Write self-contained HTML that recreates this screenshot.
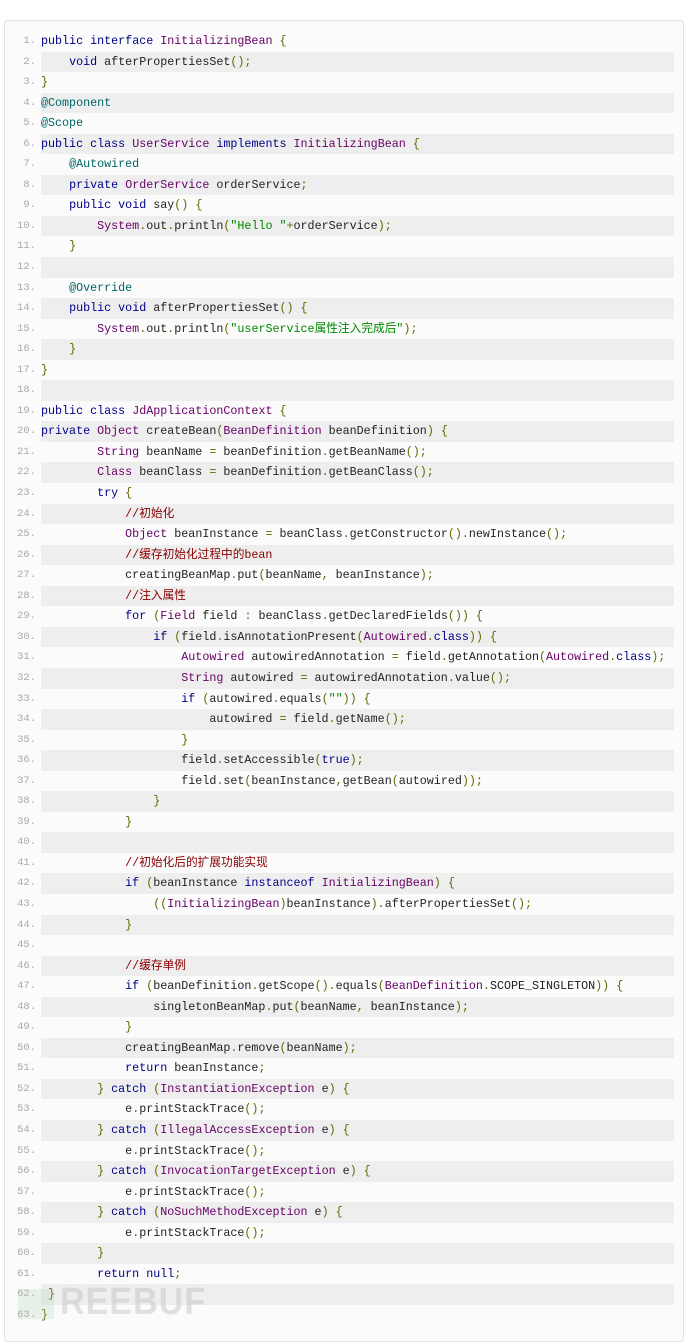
<!DOCTYPE html>
<html><head><meta charset="utf-8"><style>
html,body{margin:0;padding:0;background:#fff;width:690px;height:1326px;overflow:hidden}
.box{position:absolute;left:4px;top:20px;width:678px;height:1320px;border:1px solid #e3e3e3;border-radius:3px;background:#fbfbfb}
.code{position:absolute;left:0;top:31px;width:690px;font-family:"Liberation Mono","Noto Sans CJK SC",monospace;font-size:11.7px;color:#222}
.l{position:relative;height:20.55px;line-height:20.55px;white-space:pre}
.l .n{position:absolute;left:0;width:36px;text-align:right;color:#aaa;font-size:10.5px}
.l .c0{position:absolute;left:41px;right:16px;top:0;bottom:0;padding-left:0}
.l:nth-child(even) .c0{background:#eeeeee}
.k{color:#000088}.t{color:#660066}.a{color:#006666}.s{color:#008800}.c{color:#880000}.p{color:#666600}
.wm{position:absolute;left:60px;top:1281px;font-family:"Liberation Sans",sans-serif;font-weight:bold;font-size:38px;color:rgba(190,190,190,0.45);letter-spacing:1px;z-index:5;transform:scaleX(0.9);transform-origin:left}
.wmi{position:absolute;left:18px;top:1289px;width:36px;height:30px;z-index:5;background:rgba(170,210,180,0.25)}
</style></head><body>
<div class="box"></div>
<div class="code">
<div class="l"><span class="n">1.</span><span class="c0"><span class="k">public</span> <span class="k">interface</span> <span class="t">InitializingBean</span> <span class="p">{</span></span></div>
<div class="l"><span class="n">2.</span><span class="c0">    <span class="k">void</span> afterPropertiesSet<span class="p">();</span></span></div>
<div class="l"><span class="n">3.</span><span class="c0"><span class="p">}</span></span></div>
<div class="l"><span class="n">4.</span><span class="c0"><span class="a">@Component</span></span></div>
<div class="l"><span class="n">5.</span><span class="c0"><span class="a">@Scope</span></span></div>
<div class="l"><span class="n">6.</span><span class="c0"><span class="k">public</span> <span class="k">class</span> <span class="t">UserService</span> <span class="k">implements</span> <span class="t">InitializingBean</span> <span class="p">{</span></span></div>
<div class="l"><span class="n">7.</span><span class="c0">    <span class="a">@Autowired</span></span></div>
<div class="l"><span class="n">8.</span><span class="c0">    <span class="k">private</span> <span class="t">OrderService</span> orderService<span class="p">;</span></span></div>
<div class="l"><span class="n">9.</span><span class="c0">    <span class="k">public</span> <span class="k">void</span> say<span class="p">()</span> <span class="p">{</span></span></div>
<div class="l"><span class="n">10.</span><span class="c0">        <span class="t">System</span><span class="p">.</span>out<span class="p">.</span>println<span class="p">(</span><span class="s">"Hello "</span><span class="p">+</span>orderService<span class="p">);</span></span></div>
<div class="l"><span class="n">11.</span><span class="c0">    <span class="p">}</span></span></div>
<div class="l"><span class="n">12.</span><span class="c0"></span></div>
<div class="l"><span class="n">13.</span><span class="c0">    <span class="a">@Override</span></span></div>
<div class="l"><span class="n">14.</span><span class="c0">    <span class="k">public</span> <span class="k">void</span> afterPropertiesSet<span class="p">()</span> <span class="p">{</span></span></div>
<div class="l"><span class="n">15.</span><span class="c0">        <span class="t">System</span><span class="p">.</span>out<span class="p">.</span>println<span class="p">(</span><span class="s">"userService属性注入完成后"</span><span class="p">);</span></span></div>
<div class="l"><span class="n">16.</span><span class="c0">    <span class="p">}</span></span></div>
<div class="l"><span class="n">17.</span><span class="c0"><span class="p">}</span></span></div>
<div class="l"><span class="n">18.</span><span class="c0"></span></div>
<div class="l"><span class="n">19.</span><span class="c0"><span class="k">public</span> <span class="k">class</span> <span class="t">JdApplicationContext</span> <span class="p">{</span></span></div>
<div class="l"><span class="n">20.</span><span class="c0"><span class="k">private</span> <span class="t">Object</span> createBean<span class="p">(</span><span class="t">BeanDefinition</span> beanDefinition<span class="p">)</span> <span class="p">{</span></span></div>
<div class="l"><span class="n">21.</span><span class="c0">        <span class="t">String</span> beanName <span class="p">=</span> beanDefinition<span class="p">.</span>getBeanName<span class="p">();</span></span></div>
<div class="l"><span class="n">22.</span><span class="c0">        <span class="t">Class</span> beanClass <span class="p">=</span> beanDefinition<span class="p">.</span>getBeanClass<span class="p">();</span></span></div>
<div class="l"><span class="n">23.</span><span class="c0">        <span class="k">try</span> <span class="p">{</span></span></div>
<div class="l"><span class="n">24.</span><span class="c0">            <span class="c">//初始化</span></span></div>
<div class="l"><span class="n">25.</span><span class="c0">            <span class="t">Object</span> beanInstance <span class="p">=</span> beanClass<span class="p">.</span>getConstructor<span class="p">().</span>newInstance<span class="p">();</span></span></div>
<div class="l"><span class="n">26.</span><span class="c0">            <span class="c">//缓存初始化过程中的bean</span></span></div>
<div class="l"><span class="n">27.</span><span class="c0">            creatingBeanMap<span class="p">.</span>put<span class="p">(</span>beanName<span class="p">,</span> beanInstance<span class="p">);</span></span></div>
<div class="l"><span class="n">28.</span><span class="c0">            <span class="c">//注入属性</span></span></div>
<div class="l"><span class="n">29.</span><span class="c0">            <span class="k">for</span> <span class="p">(</span><span class="t">Field</span> field <span class="p">:</span> beanClass<span class="p">.</span>getDeclaredFields<span class="p">())</span> <span class="p">{</span></span></div>
<div class="l"><span class="n">30.</span><span class="c0">                <span class="k">if</span> <span class="p">(</span>field<span class="p">.</span>isAnnotationPresent<span class="p">(</span><span class="t">Autowired</span><span class="p">.</span><span class="k">class</span><span class="p">))</span> <span class="p">{</span></span></div>
<div class="l"><span class="n">31.</span><span class="c0">                    <span class="t">Autowired</span> autowiredAnnotation <span class="p">=</span> field<span class="p">.</span>getAnnotation<span class="p">(</span><span class="t">Autowired</span><span class="p">.</span><span class="k">class</span><span class="p">);</span></span></div>
<div class="l"><span class="n">32.</span><span class="c0">                    <span class="t">String</span> autowired <span class="p">=</span> autowiredAnnotation<span class="p">.</span>value<span class="p">();</span></span></div>
<div class="l"><span class="n">33.</span><span class="c0">                    <span class="k">if</span> <span class="p">(</span>autowired<span class="p">.</span>equals<span class="p">(</span><span class="s">""</span><span class="p">))</span> <span class="p">{</span></span></div>
<div class="l"><span class="n">34.</span><span class="c0">                        autowired <span class="p">=</span> field<span class="p">.</span>getName<span class="p">();</span></span></div>
<div class="l"><span class="n">35.</span><span class="c0">                    <span class="p">}</span></span></div>
<div class="l"><span class="n">36.</span><span class="c0">                    field<span class="p">.</span>setAccessible<span class="p">(</span><span class="k">true</span><span class="p">);</span></span></div>
<div class="l"><span class="n">37.</span><span class="c0">                    field<span class="p">.</span>set<span class="p">(</span>beanInstance<span class="p">,</span>getBean<span class="p">(</span>autowired<span class="p">));</span></span></div>
<div class="l"><span class="n">38.</span><span class="c0">                <span class="p">}</span></span></div>
<div class="l"><span class="n">39.</span><span class="c0">            <span class="p">}</span></span></div>
<div class="l"><span class="n">40.</span><span class="c0"></span></div>
<div class="l"><span class="n">41.</span><span class="c0">            <span class="c">//初始化后的扩展功能实现</span></span></div>
<div class="l"><span class="n">42.</span><span class="c0">            <span class="k">if</span> <span class="p">(</span>beanInstance <span class="k">instanceof</span> <span class="t">InitializingBean</span><span class="p">)</span> <span class="p">{</span></span></div>
<div class="l"><span class="n">43.</span><span class="c0">                <span class="p">((</span><span class="t">InitializingBean</span><span class="p">)</span>beanInstance<span class="p">).</span>afterPropertiesSet<span class="p">();</span></span></div>
<div class="l"><span class="n">44.</span><span class="c0">            <span class="p">}</span></span></div>
<div class="l"><span class="n">45.</span><span class="c0"></span></div>
<div class="l"><span class="n">46.</span><span class="c0">            <span class="c">//缓存单例</span></span></div>
<div class="l"><span class="n">47.</span><span class="c0">            <span class="k">if</span> <span class="p">(</span>beanDefinition<span class="p">.</span>getScope<span class="p">().</span>equals<span class="p">(</span><span class="t">BeanDefinition</span><span class="p">.</span>SCOPE_SINGLETON<span class="p">))</span> <span class="p">{</span></span></div>
<div class="l"><span class="n">48.</span><span class="c0">                singletonBeanMap<span class="p">.</span>put<span class="p">(</span>beanName<span class="p">,</span> beanInstance<span class="p">);</span></span></div>
<div class="l"><span class="n">49.</span><span class="c0">            <span class="p">}</span></span></div>
<div class="l"><span class="n">50.</span><span class="c0">            creatingBeanMap<span class="p">.</span>remove<span class="p">(</span>beanName<span class="p">);</span></span></div>
<div class="l"><span class="n">51.</span><span class="c0">            <span class="k">return</span> beanInstance<span class="p">;</span></span></div>
<div class="l"><span class="n">52.</span><span class="c0">        <span class="p">}</span> <span class="k">catch</span> <span class="p">(</span><span class="t">InstantiationException</span> e<span class="p">)</span> <span class="p">{</span></span></div>
<div class="l"><span class="n">53.</span><span class="c0">            e<span class="p">.</span>printStackTrace<span class="p">();</span></span></div>
<div class="l"><span class="n">54.</span><span class="c0">        <span class="p">}</span> <span class="k">catch</span> <span class="p">(</span><span class="t">IllegalAccessException</span> e<span class="p">)</span> <span class="p">{</span></span></div>
<div class="l"><span class="n">55.</span><span class="c0">            e<span class="p">.</span>printStackTrace<span class="p">();</span></span></div>
<div class="l"><span class="n">56.</span><span class="c0">        <span class="p">}</span> <span class="k">catch</span> <span class="p">(</span><span class="t">InvocationTargetException</span> e<span class="p">)</span> <span class="p">{</span></span></div>
<div class="l"><span class="n">57.</span><span class="c0">            e<span class="p">.</span>printStackTrace<span class="p">();</span></span></div>
<div class="l"><span class="n">58.</span><span class="c0">        <span class="p">}</span> <span class="k">catch</span> <span class="p">(</span><span class="t">NoSuchMethodException</span> e<span class="p">)</span> <span class="p">{</span></span></div>
<div class="l"><span class="n">59.</span><span class="c0">            e<span class="p">.</span>printStackTrace<span class="p">();</span></span></div>
<div class="l"><span class="n">60.</span><span class="c0">        <span class="p">}</span></span></div>
<div class="l"><span class="n">61.</span><span class="c0">        <span class="k">return</span> <span class="k">null</span><span class="p">;</span></span></div>
<div class="l"><span class="n">62.</span><span class="c0"> <span class="p">}</span></span></div>
<div class="l"><span class="n">63.</span><span class="c0"><span class="p">}</span></span></div>
</div>
<div class="wmi"></div>
<div class="wm">REEBUF</div>
</body></html>
